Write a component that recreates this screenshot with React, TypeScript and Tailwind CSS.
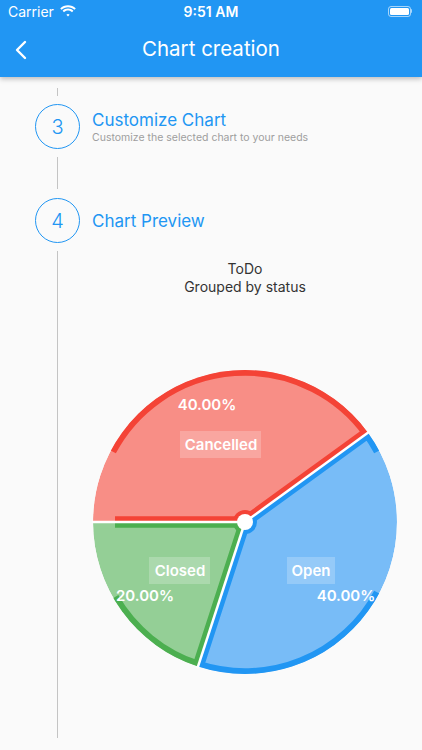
import React from 'react';

const CX = 153;
const CY = 162;
const R = 152;

function pt(deg: number, r: number) {
  const a = (deg * Math.PI) / 180;
  return `${(CX + r * Math.cos(a)).toFixed(2)} ${(CY + r * Math.sin(a)).toFixed(2)}`;
}

function wedge(a0: number, a1: number) {
  const large = a1 - a0 > 180 ? 1 : 0;
  return `M ${CX} ${CY} L ${pt(a0, R)} A ${R} ${R} 0 ${large} 1 ${pt(a1, R)} Z`;
}

const slices = [
  {
    id: 'cancelled',
    a0: 180,
    a1: 324,
    fill: '#F88E86',
    stroke: '#F44336',
    line: `M ${pt(208, R)} A ${R} ${R} 0 0 1 ${pt(324, R)} L ${CX} ${CY} L ${pt(180, 130)}`,
  },
  {
    id: 'open',
    a0: 324,
    a1: 468,
    fill: '#78BCF7',
    stroke: '#2196F3',
    line: `M ${CX} ${CY} L ${pt(324, R)} A ${R} ${R} 0 0 1 ${pt(332, R)} M ${pt(388, R)} A ${R} ${R} 0 0 1 ${pt(468, R)} L ${CX} ${CY}`,
  },
  {
    id: 'closed',
    a0: 108,
    a1: 180,
    fill: '#94CF96',
    stroke: '#4CAF50',
    line: `M ${pt(180, 130)} L ${CX} ${CY} L ${pt(108, R)} A ${R} ${R} 0 0 1 ${pt(150, R)}`,
  },
];

function PieChart() {
  const font = 'Inter, "Noto Sans", sans-serif';
  return (
    <svg width="306" height="320" viewBox="0 0 306 320">
      <defs>
        {slices.map((s) => (
          <clipPath key={s.id} id={`clip-${s.id}`}>
            <path d={wedge(s.a0, s.a1)} />
          </clipPath>
        ))}
      </defs>
      {slices.map((s) => (
        <g key={s.id} clipPath={`url(#clip-${s.id})`}>
          <path d={wedge(s.a0, s.a1)} fill={s.fill} />
          <path d={s.line} fill="none" stroke={s.stroke} strokeWidth="11.5" strokeLinejoin="round" />
          <circle cx={CX} cy={CY} r="12" fill={s.stroke} />
        </g>
      ))}
      {[180, 324, 108].map((a) => (
        <path key={a} d={`M ${CX} ${CY} L ${pt(a, R + 2)}`} stroke="#fff" strokeWidth="2.5" />
      ))}
      <circle cx={CX} cy={CY} r="8" fill="#fff" />

      <rect x="88" y="71" width="81" height="27" fill="#ffffff" fillOpacity="0.22" />
      <rect x="57" y="197" width="61" height="27" fill="#ffffff" fillOpacity="0.22" />
      <rect x="195" y="197" width="48" height="27" fill="#ffffff" fillOpacity="0.22" />

      <g fill="#fff" fontFamily={font} fontSize="15" fontWeight="600" textAnchor="middle">
        <text x="129" y="90">Cancelled</text>
        <text x="88" y="216">Closed</text>
        <text x="219" y="216">Open</text>
        <text x="115" y="50">40.00%</text>
        <text x="254" y="241">40.00%</text>
        <text x="53" y="241">20.00%</text>
      </g>
    </svg>
  );
}

function StepCircle({ n }: { n: number }) {
  return (
    <div className="w-[45px] h-[45px] rounded-full border border-[#2196F3] flex items-center justify-center text-[20px] text-[#2196F3] font-light shrink-0">
      {n}
    </div>
  );
}

function Line({ h }: { h: string }) {
  return (
    <div className="w-[45px] flex justify-center shrink-0">
      <div className={`w-px bg-[#c4c4c4] ${h}`} />
    </div>
  );
}

export default function App() {
  return (
    <div
      className="w-[422px] h-[750px] overflow-hidden bg-[#fafafa]"
      style={{ fontFamily: 'Inter, "Noto Sans", sans-serif' }}
    >
      <div className="bg-[#2196F3] h-[77px] shadow-[0_2px_5px_rgba(0,0,0,0.25)] relative z-10 text-white">
        <div className="h-[22px] flex items-center justify-between px-2 text-[14px]">
          <div className="flex items-center gap-[6px] w-[100px]">
            <span>Carrier</span>
            <svg width="16" height="12" viewBox="0 0 16 12" fill="white">
              <path d="M8 2.2c2.5 0 4.7 1 6.4 2.6L15.8 3.4C13.8 1.4 11 .2 8 .2S2.2 1.4.2 3.4l1.4 1.4C3.3 3.2 5.5 2.2 8 2.2z" />
              <path d="M8 5.6c1.5 0 2.9.6 4 1.6l1.4-1.4C12 4.4 10.1 3.6 8 3.6s-4 .8-5.4 2.2L4 7.2c1.1-1 2.5-1.6 4-1.6z" />
              <path d="M8 9c.6 0 1.2.3 1.6.7L8 11.4 6.4 9.7C6.8 9.3 7.4 9 8 9z" />
            </svg>
          </div>
          <span className="font-semibold">9:51 AM</span>
          <div className="w-[100px] flex justify-end pr-[2px]">
            <div className="flex items-center">
              <div className="w-[23px] h-[11px] rounded-[3px] border border-white/60 p-[1px]">
                <div className="w-full h-full bg-white rounded-[1.5px]" />
              </div>
              <div className="w-[1.5px] h-[4px] bg-white/60 rounded-r" />
            </div>
          </div>
        </div>
        <div className="h-[55px] relative flex items-center justify-center">
          <svg className="absolute left-[14px] top-[18px]" width="14" height="20" viewBox="0 0 14 20">
            <path d="M11 2 L3 10 L11 18" fill="none" stroke="white" strokeWidth="2.4" strokeLinecap="round" strokeLinejoin="round" />
          </svg>
          <span className="text-[20.5px] mb-[1px]">Chart creation</span>
        </div>
      </div>

      <div className="flex flex-col pl-[35px]">
        <div className="pt-[11px]">
          <Line h="h-[8px]" />
        </div>
        <div className="flex items-center mt-[8px]">
          <StepCircle n={3} />
          <div className="ml-[12px] flex flex-col pt-[3px]">
            <span className="text-[17px] leading-[20px] text-[#2196F3]">Customize Chart</span>
            <span className="text-[10.5px] leading-[16px] text-[#9e9e9e]">
              Customize the selected chart to your needs
            </span>
          </div>
        </div>
        <div className="mt-[8px]">
          <Line h="h-[32px]" />
        </div>
        <div className="flex items-center mt-[9px]">
          <StepCircle n={4} />
          <span className="ml-[12px] pt-[3px] text-[17px] text-[#2196F3]">Chart Preview</span>
        </div>
        <div className="flex mt-[8px]">
          <Line h="h-[487px]" />
          <div className="ml-[12px] w-[306px] flex flex-col items-center pt-[9px]">
            <span className="text-[14px] leading-[18px] text-[#333]">ToDo</span>
            <span className="text-[14px] leading-[18px] text-[#333]">Grouped by status</span>
            <div className="mt-[64px]">
              <PieChart />
            </div>
          </div>
        </div>
      </div>
    </div>
  );
}
